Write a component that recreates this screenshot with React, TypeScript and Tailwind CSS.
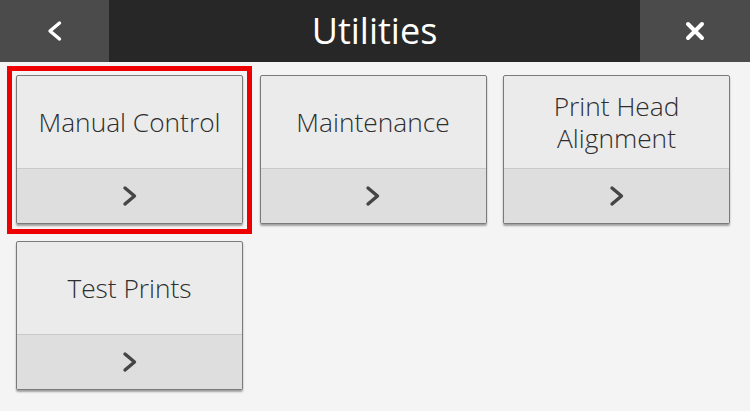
import type { ReactNode } from "react"

type Item = { id: string; label: ReactNode; selected?: boolean }

const items: Item[] = [
  { id: "manual", label: "Manual Control", selected: true },
  { id: "maint", label: "Maintenance" },
  { id: "align", label: <>Print Head<br />Alignment</> },
  { id: "test", label: "Test Prints" },
]

function Chevron({ dir }: { dir: "left" | "right" }) {
  return (
    <svg width="16" height="22" viewBox="0 0 16 22" fill="none">
      <path
        d={dir === "right" ? "M3 3 L12.5 11 L3 19" : "M12.5 3 L3 11 L12.5 19"}
        stroke="currentColor"
        strokeWidth="3.4"
        strokeLinecap="round"
        strokeLinejoin="round"
      />
    </svg>
  )
}

function Card({ item }: { item: Item }) {
  return (
    <button className="relative flex h-[149px] w-[227px] flex-col rounded-[2px] border border-[#7a7a7a] bg-[#ebebeb] shadow-[0_2px_2px_rgba(0,0,0,0.35)]">
      {/* selection frame */}
      {item.selected && (
        <span className="pointer-events-none absolute -top-[10px] -left-[10px] -right-[10px] -bottom-[11px] border-[5px] border-[#ee0000]" />
      )}
      <div className="flex h-[93px] w-full items-center justify-center border-b border-[#c9c9c9] text-center text-[26.3px] font-light leading-[32px] text-[#2e2e2e]">
        {item.label}
      </div>
      <div className="flex w-full flex-1 items-center justify-center bg-[#dedede] text-[#454545]">
        <Chevron dir="right" />
      </div>
    </button>
  )
}

export default function App() {
  return (
    <div
      className="flex h-[411px] w-[750px] flex-col bg-[#f4f4f4]"
      style={{ fontFamily: '"Open Sans", "DejaVu Sans", sans-serif' }}
    >
      {/* header */}
      <div className="flex h-[62px] bg-[#272727] text-white">
        <button className="flex w-[109px] items-center justify-center bg-[#4b4b4b]">
          <Chevron dir="left" />
        </button>
        <div className="flex flex-1 items-center justify-center text-[36px] leading-none">
          Utilities
        </div>
        <button className="flex w-[110px] items-center justify-center bg-[#4b4b4b]">
          <svg width="20" height="20" viewBox="0 0 20 20">
            <path d="M3 3 L17 17 M17 3 L3 17" stroke="white" strokeWidth="4" strokeLinecap="round" />
          </svg>
        </button>
      </div>

      {/* grid */}
      <div className="grid grid-cols-[227px_227px_227px] gap-x-[16.5px] gap-y-[17px] pl-4 pt-[13px]">
        {items.map(it => (
          <Card key={it.id} item={it} />
        ))}
      </div>
    </div>
  )
}
